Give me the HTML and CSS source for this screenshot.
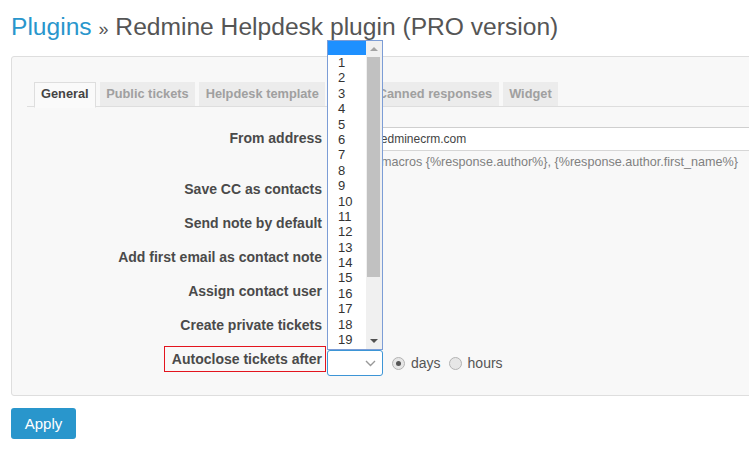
FILE: index.html
```html
<!DOCTYPE html>
<html lang="en">
<head>
    <meta charset="UTF-8">
    <meta name="viewport" content="width=device-width, initial-scale=1.0">
    <title>Redmine Helpdesk plugin settings</title>
    <link rel="stylesheet" href="styles.css">
</head>

<body>
    <h2 class="title"><a href="#" class="crumb">Plugins</a> <span class="sep">&raquo;</span> Redmine Helpdesk plugin (PRO version)</h2>

    <form class="settings">
        <div class="box">
            <div class="tabs">
                <a href="#" class="tab selected">General</a>
                <a href="#" class="tab">Public tickets</a>
                <a href="#" class="tab">Helpdesk template</a>
                <a href="#" class="tab">Mail</a>
                <a href="#" class="tab">Canned responses</a>
                <a href="#" class="tab">Widget</a>
            </div>

            <div class="tabular">
                <label class="row-label first">From address</label>
                <div class="field"><input type="text" class="text-input" value="admin@redminecrm.com"></div>

                <div></div>
                <div class="hint">Supports macros {%response.author%}, {%response.author.first_name%}</div>

                <label class="row-label">Save CC as contacts</label>
                <div class="field"><input type="checkbox" checked></div>

                <label class="row-label">Send note by default</label>
                <div class="field"><input type="checkbox"></div>

                <label class="row-label">Add first email as contact note</label>
                <div class="field"><input type="checkbox"></div>

                <label class="row-label">Assign contact user</label>
                <div class="field"><input type="checkbox"></div>

                <label class="row-label">Create private tickets</label>
                <div class="field"><input type="checkbox"></div>

                <label class="row-label"><span class="marked">Autoclose tickets after</span></label>
                <div class="field autoclose">
                    <div class="select-box">
                        <svg class="chevron" width="11" height="7" viewBox="0 0 11 7"><path d="M1 1 L5.5 5.5 L10 1" fill="none" stroke="#999" stroke-width="1.4"/></svg>
                    </div>
                    <label class="radio"><input type="radio" name="unit" checked> days</label>
                    <label class="radio"><input type="radio" name="unit"> hours</label>
                </div>
            </div>
        </div>

        <button type="button" class="apply">Apply</button>
    </form>

    <!-- open list of the autoclose select -->
    <div class="dropdown">
        <ul class="options">
            <li class="current"></li>
            <li>1</li><li>2</li><li>3</li><li>4</li><li>5</li>
            <li>6</li><li>7</li><li>8</li><li>9</li><li>10</li>
            <li>11</li><li>12</li><li>13</li><li>14</li><li>15</li>
            <li>16</li><li>17</li><li>18</li><li>19</li>
        </ul>
        <div class="scrollbar">
            <span class="arrow up"></span>
            <span class="thumb"></span>
            <span class="arrow down"></span>
        </div>
    </div>
</body>
</html>
```

FILE: styles.css
```css
html {
    overflow: hidden;
}

body {
    margin: 0;
    padding: 0 11px;
    font-family: "Liberation Sans", Arial, sans-serif;
    font-size: 13px;
    color: #4a4a4a;
    background-color: #fff;
}

.title {
    margin: 12px 0 12px 0;
    font-size: 24.6px;
    line-height: 30px;
    font-weight: normal;
    color: #555;
    white-space: nowrap;
}

.crumb {
    color: #2996cc;
    text-decoration: none;
}

.sep {
    font-size: 18px;
}

.box {
    margin-right: -40px;
    background-color: #f8f8f8;
    border: 1px solid #dedede;
    border-radius: 3px;
    padding: 25px 0 19px 0;
}

.tabs {
    display: flex;
    gap: 4px;
    margin-left: 15px;
    padding-left: 7px;
    border-bottom: 1px solid #dedede;
    height: 24px;
}

.tab {
    display: block;
    height: 24px;
    line-height: 24px;
    padding: 0 6.5px;
    font-size: 12.8px;
    font-weight: bold;
    color: #a0a0a0;
    background-color: #ececec;
    text-decoration: none;
    white-space: nowrap;
}

    .tab.selected {
        background-color: #fafafa;
        color: #444;
        border: 1px solid #dedede;
        border-bottom-color: #fafafa;
        height: 24px;
        line-height: 22px;
        padding: 0 6px;
    }

.tabular {
    display: grid;
    grid-template-columns: 310px 1fr;
    grid-template-rows: 24px 21px repeat(6, 34px);
    column-gap: 5px;
    margin-top: 20px;
}

.row-label {
    text-align: right;
    font-size: 14px;
    font-weight: bold;
    align-self: center;
    white-space: nowrap;
}

    .row-label.first {
        margin-top: -3px;
    }

.field {
    display: flex;
    align-items: center;
}

.text-input {
    box-sizing: border-box;
    width: 100%;
    height: 24px;
    margin: 0;
    padding: 0 4px;
    border: 1px solid #d6d6d6;
    border-top-color: #cfcfcf;
    background-color: #fff;
    font-family: inherit;
    font-size: 12px;
    color: #444;
}

.hint {
    font-size: 12.6px;
    color: #808080;
    align-self: center;
    white-space: nowrap;
}

.marked {
    display: inline-block;
    border: 1px solid #e3141e;
    padding: 4px 3px 4px 7px;
    margin-right: -4px;
    line-height: 16px;
}

.autoclose {
    align-self: end;
}

.select-box {
    box-sizing: border-box;
    width: 56px;
    height: 26px;
    border: 1px solid #3d95d6;
    border-radius: 3px;
    background-color: #fff;
    display: flex;
    align-items: center;
    justify-content: flex-end;
    padding-right: 6px;
}

.radio {
    display: flex;
    align-items: center;
    font-size: 14px;
    color: #555;
    margin-left: 9px;
}

    .radio + .radio {
        margin-left: 8px;
    }

    .radio input {
        appearance: none;
        -webkit-appearance: none;
        box-sizing: border-box;
        width: 13px;
        height: 13px;
        margin: 0 6px 0 0;
        border: 1px solid #b3b3b3;
        border-radius: 50%;
        background-color: #e6e6e6;
        position: relative;
    }

        .radio input:checked::after {
            content: "";
            position: absolute;
            left: 3px;
            top: 3px;
            width: 5px;
            height: 5px;
            border-radius: 50%;
            background-color: #555;
        }

.apply {
    margin-top: 12px;
    width: 65px;
    height: 31px;
    border: none;
    border-radius: 3px;
    background-color: #2996cc;
    color: #fff;
    font-family: inherit;
    font-size: 15px;
}

.dropdown {
    position: absolute;
    left: 327px;
    top: 40px;
    box-sizing: border-box;
    width: 56px;
    height: 310px;
    border: 1px solid #7c9dd6;
    background-color: #fff;
    display: flex;
    overflow: hidden;
}

.options {
    list-style: none;
    margin: 0;
    padding: 0;
    width: 38px;
    font-size: 13px;
    color: #333;
}

    .options li {
        height: 15.4px;
        line-height: 15.4px;
        padding-left: 10px;
    }

    .options li.current {
        height: 14px;
        background-color: #1e90ff;
    }

.scrollbar {
    position: relative;
    width: 16px;
    background-color: #f0f0f0;
}

.thumb {
    position: absolute;
    left: 1px;
    top: 16px;
    width: 13px;
    height: 220px;
    background-color: #c1c1c1;
}

.arrow {
    position: absolute;
    left: 4px;
    width: 0;
    height: 0;
    border-left: 4px solid transparent;
    border-right: 4px solid transparent;
}

    .arrow.up {
        top: 6px;
        border-bottom: 4px solid #a3a3a3;
    }

    .arrow.down {
        bottom: 6px;
        border-top: 4px solid #505050;
    }
```
